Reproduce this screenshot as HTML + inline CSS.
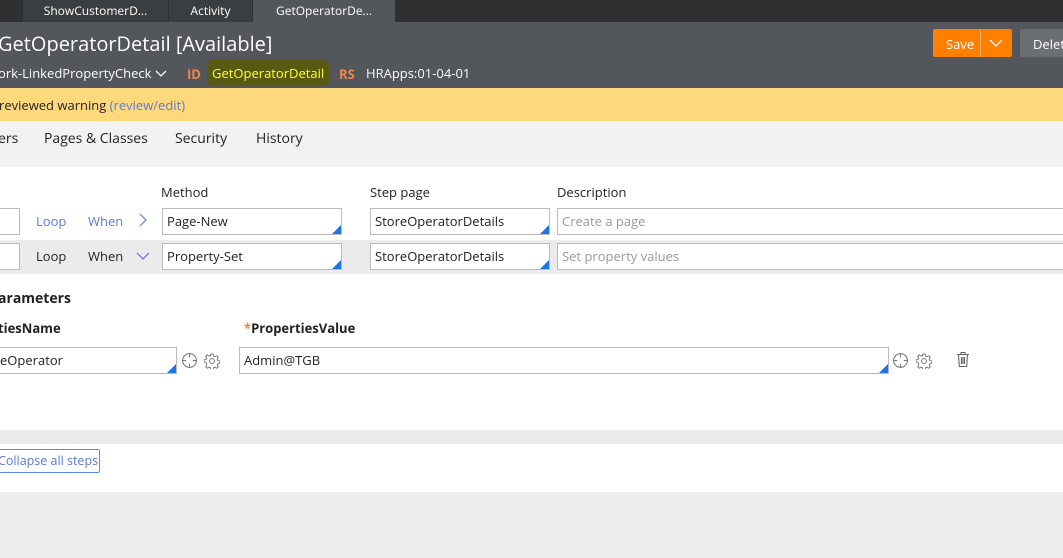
<!DOCTYPE html><html><head><style>
*{box-sizing:border-box;margin:0;padding:0}
body{width:1063px;height:558px;overflow:hidden;font-family:"Open Sans","Liberation Sans","DejaVu Sans",sans-serif;background:#eeeeee;position:relative;font-size:13px;color:#222}
.a{position:absolute;white-space:nowrap}
.inp{position:absolute;background:#fff;border:1px solid #bbb;height:27px;font-size:13px;padding:3px 4px;color:#222}
.tri{position:absolute;right:0;bottom:0;width:0;height:0;border-left:9px solid transparent;border-bottom:9px solid #1a73e8}
.ph{color:#999}
</style></head><body>
<div class="a" style="left:0;top:0;width:1063px;height:22px;background:#2e3032"></div>
<div class="a" style="left:23px;top:0;width:145px;height:22px;background:#3b3e41;color:#fff;font-size:12px;text-align:center;line-height:22px">ShowCustomerD...</div>
<div class="a" style="left:169px;top:0;width:83px;height:22px;background:#3b3e41;color:#fff;font-size:12px;text-align:center;line-height:22px">Activity</div>
<div class="a" style="left:253px;top:0;width:142px;height:22px;background:#53565b;color:#fff;font-size:12px;text-align:center;line-height:22px">GetOperatorDe...</div>
<div class="a" style="left:0;top:22px;width:1063px;height:66px;background:#53565b"></div>
<div class="a" style="left:-2px;top:30px;color:#fff;font-size:20px">GetOperatorDetail [Available]</div>
<div class="a" style="left:-2px;top:64px;color:#fff;font-size:13px">ork-LinkedPropertyCheck <svg width="12" height="8" viewBox="0 0 12 8"><path d="M1 1l5 5 5-5" stroke="#fff" fill="none" stroke-width="1.3"/></svg></div>
<div class="a" style="left:187px;top:65px;color:#e8884a;font-size:13px;font-weight:bold">ID</div>
<div class="a" style="left:207px;top:60px;width:122px;height:26px;background:#585a12;border-radius:6px"></div>
<div class="a" style="left:212px;top:64px;color:#ffff33;font-size:13px">GetOperatorDetail</div>
<div class="a" style="left:339px;top:65px;color:#e8884a;font-size:13px;font-weight:bold">RS</div>
<div class="a" style="left:366px;top:64px;color:#fff;font-size:13px">HRApps:01-04-01</div>
<div class="a" style="left:933px;top:29px;width:79px;height:28px;background:#ff8000;border-radius:2px"></div>
<div class="a" style="left:946px;top:35px;color:#fff;font-size:13px">Save</div>
<div class="a" style="left:980px;top:29px;width:1px;height:28px;background:#ffb366"></div>
<svg class="a" style="left:989px;top:39px" width="14" height="8" viewBox="0 0 14 8"><path d="M1 1l6 6 6-6" stroke="#fff" fill="none" stroke-width="1.3"/></svg>
<div class="a" style="left:1020px;top:29px;width:50px;height:28px;background:#6b6e72;border-radius:2px;color:#fff;padding:6px 13px;font-size:13px">Delete</div>
<div class="a" style="left:0;top:88px;width:1063px;height:33px;background:#fed97b"></div>
<div class="a" style="left:-1px;top:96px;font-size:13px;color:#222">reviewed warning <span style="color:#5b7bd5">(review/edit)</span></div>
<div class="a" style="left:0;top:121px;width:1063px;height:46px;background:#f2f2f2"></div>
<div class="a" style="left:-2px;top:129px;font-size:14px">ers</div>
<div class="a" style="left:44px;top:129px;font-size:14px">Pages &amp; Classes</div>
<div class="a" style="left:175px;top:129px;font-size:14px">Security</div>
<div class="a" style="left:256px;top:129px;font-size:14px">History</div>
<div class="a" style="left:0;top:167px;width:1063px;height:263px;background:#fff"></div>
<div class="a" style="left:-3px;top:183px;font-size:13px">l</div>
<div class="a" style="left:161px;top:183px;font-size:13px">Method</div>
<div class="a" style="left:370px;top:183px;font-size:13px">Step page</div>
<div class="a" style="left:557px;top:183px;font-size:13px">Description</div>
<div class="a" style="left:0;top:240px;width:1063px;height:34px;background:#ebebeb"></div>
<div class="inp" style="left:-5px;top:208px;width:25px"></div>
<div class="a" style="left:36px;top:212px;color:#5b7bd5">Loop</div>
<div class="a" style="left:88px;top:212px;color:#5b7bd5">When</div>
<svg class="a" style="left:138px;top:213px" width="10" height="14" viewBox="0 0 10 14"><path d="M2 1l6 6-6 6" stroke="#5b7bd5" fill="none" stroke-width="1.2"/></svg>
<div class="inp" style="left:162px;top:208px;width:180px">Page-New<div class="tri"></div></div>
<div class="inp" style="left:370px;top:208px;width:180px">StoreOperatorDetails<div class="tri"></div></div>
<div class="inp ph" style="left:557px;top:208px;width:520px">Create a page</div>
<div class="inp" style="left:-5px;top:243px;width:25px"></div>
<div class="a" style="left:36px;top:247px">Loop</div>
<div class="a" style="left:88px;top:247px">When</div>
<svg class="a" style="left:136px;top:252px" width="14" height="8" viewBox="0 0 14 8"><path d="M1 1l6 6 6-6" stroke="#5b7bd5" fill="none" stroke-width="1.2"/></svg>
<div class="inp" style="left:162px;top:243px;width:180px">Property-Set<div class="tri"></div></div>
<div class="inp" style="left:370px;top:243px;width:180px">StoreOperatorDetails<div class="tri"></div></div>
<div class="inp ph" style="left:557px;top:243px;width:520px">Set property values</div>
<div class="a" style="left:-2px;top:289px;font-size:14px;font-weight:bold">arameters</div>
<div class="a" style="left:-2px;top:319px;font-size:13px;font-weight:bold">tiesName</div>
<div class="a" style="left:244px;top:319px;font-size:13px;font-weight:bold"><span style="color:#e8884a">*</span>PropertiesValue</div>
<div class="inp" style="left:-5px;top:347px;width:182px">eOperator<div class="tri"></div></div>
<svg class="a" style="left:181px;top:352px" width="17" height="17" viewBox="0 0 16 16" fill="none" stroke="#777" stroke-width="1"><circle cx="8" cy="8" r="6.5"/><path d="M8 1v4M8 11v4M1 8h4M11 8h4"/></svg>
<svg class="a" style="left:204px;top:353px" width="16" height="16" viewBox="0 0 16 16" fill="none" stroke="#777" stroke-width="1"><circle cx="8" cy="8" r="2.5"/><path d="M7 1h2l.5 2 1.5.7 1.8-1 1.4 1.4-1 1.8.7 1.6 2 .5v2l-2 .5-.7 1.5 1 1.8-1.4 1.4-1.8-1-1.5.7-.5 2H7l-.5-2-1.5-.7-1.8 1-1.4-1.4 1-1.8L2.1 9.5 0 9V7l2-.5.7-1.5-1-1.8 1.4-1.4 1.8 1L6.5 3z"/></svg>
<div class="inp" style="left:239px;top:347px;width:650px">Admin@TGB<div class="tri"></div></div>
<svg class="a" style="left:892px;top:352px" width="17" height="17" viewBox="0 0 16 16" fill="none" stroke="#777" stroke-width="1"><circle cx="8" cy="8" r="6.5"/><path d="M8 1v4M8 11v4M1 8h4M11 8h4"/></svg>
<svg class="a" style="left:916px;top:353px" width="16" height="16" viewBox="0 0 16 16" fill="none" stroke="#777" stroke-width="1"><circle cx="8" cy="8" r="2.5"/><path d="M7 1h2l.5 2 1.5.7 1.8-1 1.4 1.4-1 1.8.7 1.6 2 .5v2l-2 .5-.7 1.5 1 1.8-1.4 1.4-1.8-1-1.5.7-.5 2H7l-.5-2-1.5-.7-1.8 1-1.4-1.4 1-1.8L2.1 9.5 0 9V7l2-.5.7-1.5-1-1.8 1.4-1.4 1.8 1L6.5 3z"/></svg>
<svg class="a" style="left:956px;top:351px" width="14" height="17" viewBox="0 0 14 17" fill="none" stroke="#666" stroke-width="1.1"><path d="M1 3.5h12M5 3.5V1.5h4v2M2.5 3.5l.8 12h7.4l.8-12M5.5 6v7M7 6v7M8.5 6v7"/></svg>
<div class="a" style="left:0;top:430px;width:1063px;height:14px;background:#ebebeb"></div>
<div class="a" style="left:0;top:444px;width:1063px;height:48px;background:#fff"></div>
<div class="a" style="left:-5px;top:449px;width:105px;height:24px;border:1px solid #5b8ee0;border-radius:2px;color:#5b7bd5;font-size:12.5px;padding:2px 0 0 2px">Collapse all steps</div>
</body></html>
